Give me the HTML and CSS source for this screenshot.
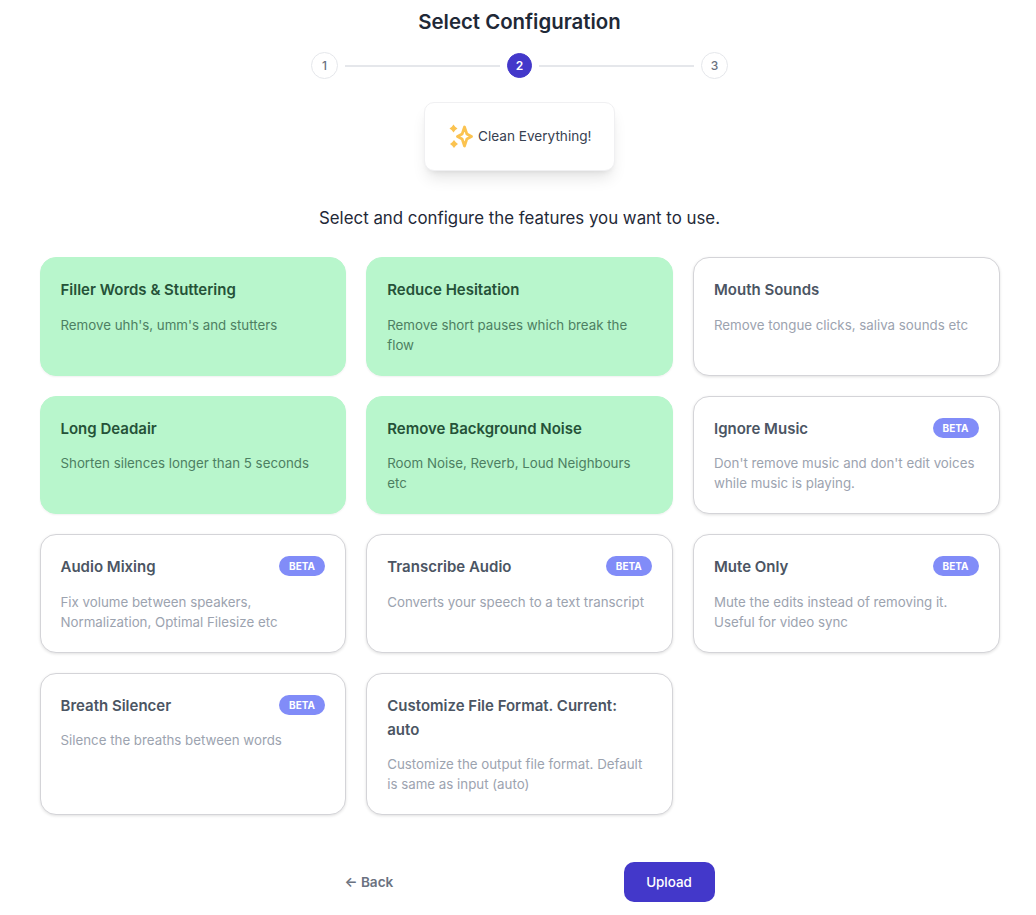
FILE: index.html
```html
<!DOCTYPE html>
<html lang="en">
<head>
<meta charset="utf-8">
<title>Select Configuration</title>
<link rel="stylesheet" href="styles.css">
</head>
<body>
<main class="page">
  <h1 class="title">Select Configuration</h1>
  <div class="stepper">
    <span class="step">1</span>
    <span class="line"></span>
    <span class="step step-active">2</span>
    <span class="line"></span>
    <span class="step">3</span>
  </div>
  <button class="clean">
    <svg class="sparkle" viewBox="0 0 24 24" width="24" height="24" fill="none">
      <path d="M15.5 3 L17.9 10.1 L22.5 12.5 L17.9 14.9 L15.5 22 L13.1 14.9 L8.5 12.5 L13.1 10.1 Z" stroke="#fbc350" stroke-width="2.8" stroke-linejoin="round"/>
      <path d="M4.5 .5 L6.2 2.8 L8.5 4.5 L6.2 6.2 L4.5 8.5 L2.8 6.2 L.5 4.5 L2.8 2.8 Z" fill="#fbc350"/>
      <path d="M5 16 L6.8 18.2 L9 20 L6.8 21.8 L5 24 L3.2 21.8 L1 20 L3.2 18.2 Z" fill="#fbc350"/>
    </svg>
    <span>Clean Everything!</span>
  </button>
  <p class="lead">Select and configure the features you want to use.</p>
  <section class="grid">
    <article class="card card-on"><div class="head"><h2>Filler Words &amp; Stuttering</h2></div><p>Remove uhh's, umm's and stutters</p></article>
    <article class="card card-on"><div class="head"><h2>Reduce Hesitation</h2></div><p>Remove short pauses which break the flow</p></article>
    <article class="card"><div class="head"><h2>Mouth Sounds</h2></div><p>Remove tongue clicks, saliva sounds etc</p></article>
    <article class="card card-on"><div class="head"><h2>Long Deadair</h2></div><p>Shorten silences longer than 5 seconds</p></article>
    <article class="card card-on"><div class="head"><h2>Remove Background Noise</h2></div><p>Room Noise, Reverb, Loud Neighbours etc</p></article>
    <article class="card"><div class="head"><h2>Ignore Music</h2><span class="beta">BETA</span></div><p>Don't remove music and don't edit voices while music is playing.</p></article>
    <article class="card"><div class="head"><h2>Audio Mixing</h2><span class="beta">BETA</span></div><p>Fix volume between speakers, Normalization, Optimal Filesize etc</p></article>
    <article class="card"><div class="head"><h2>Transcribe Audio</h2><span class="beta">BETA</span></div><p>Converts your speech to a text transcript</p></article>
    <article class="card"><div class="head"><h2>Mute Only</h2><span class="beta">BETA</span></div><p>Mute the edits instead of removing it. Useful for video sync</p></article>
    <article class="card"><div class="head"><h2>Breath Silencer</h2><span class="beta">BETA</span></div><p>Silence the breaths between words</p></article>
    <article class="card"><div class="head"><h2>Customize File Format. Current: auto</h2></div><p>Customize the output file format. Default is same as input (auto)</p></article>
  </section>
  <footer class="actions">
    <button class="back">← Back</button>
    <button class="upload">Upload</button>
  </footer>
</main>
</body>
</html>
```
FILE: styles.css
```css
* { box-sizing: border-box; }
html, body { margin: 0; background: #fff; }
body { font-family: Inter, "Liberation Sans", sans-serif; color: #1f2937; overflow: hidden; }
.page { width: 1036px; height: 915px; padding: 8px 36.5px 0 39.5px; display: flex; flex-direction: column; align-items: center; }
.title { margin: 0; font-size: 20.4px; line-height: 28px; font-weight: 600; color: #1f2937; text-align: center; }
.stepper { margin-top: 16px; display: flex; align-items: center; width: 417px; }
.step { width: 27px; height: 27px; flex: none; border: 1px solid #e5e7eb; border-radius: 50%; display: flex; align-items: center; justify-content: center; font-size: 12px; font-weight: 500; color: #6b7280; background: #fff; }
.step-active { width: 25px; height: 25px; background: #4338ca; border-color: #4338ca; color: #fff; font-weight: 600; padding-bottom: 1px; }
.line { flex: 1; height: 2px; background: #e5e7eb; margin: 0 7px; }
.clean { margin-top: 23px; width: 191px; height: 69px; border: 1px solid #f0f0f2; border-radius: 10px; background: #fff; box-shadow: 0 10px 15px -3px rgba(0,0,0,.1), 0 4px 6px -4px rgba(0,0,0,.1); display: flex; align-items: center; padding: 0 0 2px 24px; gap: 5px; font: 400 13.6px/20px Inter, sans-serif; color: #374151; }
.sparkle { flex: none; }
.lead { margin: 35px 0 0; font-size: 16.85px; line-height: 24px; color: #1f2937; text-align: center; }
.grid { margin-top: 27px; width: 960px; align-self: flex-start; display: grid; grid-template-columns: repeat(3, 306.5px); gap: 20px 20.25px; }
.card { border: 1px solid #d4d4d8; border-radius: 16px; padding: 20px; background: #fff; box-shadow: 0 1px 3px rgba(0,0,0,.12); }
.card-on { background: #b8f6cc; border-color: #b8f6cc; box-shadow: 0 1px 2px rgba(0,0,0,.06); }
.head { display: flex; justify-content: space-between; align-items: flex-start; gap: 8px; }
.card h2 { margin: 0; font-size: 15px; line-height: 24px; font-weight: 600; color: #4b5563; }
.card p { margin: 12.5px 0 0; font-size: 13.3px; line-height: 20px; color: #9ca3af; }
.card-on h2 { color: #255238; }
.card-on p { color: #4d7f62; }
.beta { flex: none; width: 46px; height: 20px; margin-top: 1px; border-radius: 10px; background: #818cf8; color: #fff; font-size: 10px; line-height: 20px; font-weight: 700; text-align: center; }
.actions { margin-top: 47px; margin-left: 20px; width: 370px; display: flex; justify-content: space-between; align-items: center; }
button { cursor: pointer; }
.back { border: 0; background: none; padding: 0; font: 600 13.6px/20px Inter, sans-serif; color: #6b7280; }
.upload { width: 91px; height: 40px; border: 0; border-radius: 10px; background: #4338ca; color: #fff; font: 500 13.4px/20px Inter, sans-serif; }
```
